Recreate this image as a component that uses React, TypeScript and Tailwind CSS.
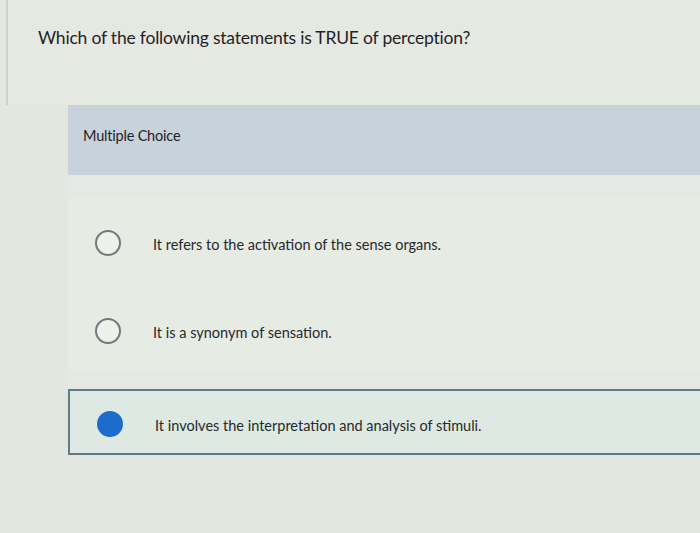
import React from 'react';

const options = [
  { text: 'It refers to the activation of the sense organs.', selected: false },
  { text: 'It is a synonym of sensation.', selected: false },
  { text: 'It involves the interpretation and analysis of stimuli.', selected: true },
];

function Radio({ selected }: { selected: boolean }) {
  if (selected) {
    return <span className="block w-[26px] h-[26px] rounded-full bg-[#1b6ccb]" />;
  }
  return <span className="block w-[26px] h-[26px] rounded-full border-2 border-[#6f7a7f] bg-[#eef1ea]" />;
}

export default function App() {
  return (
    <div
      className="w-[700px] h-[533px] overflow-hidden bg-[#e3e7e0] text-[#1f2326]"
      style={{ fontFamily: 'Lato, "Open Sans", Arial, sans-serif' }}
    >
      {/* question header */}
      <div className="h-[105px] ml-[6px] border-l-2 border-[#cfd3cc] bg-[#e6e9e2] pt-[26px] pl-[30px]">
        <h1 className="text-[17.5px] leading-[24px] tracking-[-0.2px]">
          Which of the following statements is TRUE of perception?
        </h1>
      </div>

      {/* body */}
      <div className="ml-[68px]">
        <div className="h-[70px] bg-[#c8d2dc] pl-[15px] pt-[21px]">
          <p className="text-[14.5px] leading-[20px] tracking-[-0.2px]">Multiple Choice</p>
        </div>

        <div className="pt-[22px] bg-[#e4e9e3]">
          {options.map((o, i) => (
            <div
              key={i}
              className={
                o.selected
                  ? 'flex items-center h-[66px] mt-[16px] border-2 border-r-0 border-[#5f7c86] bg-[#dde9e2]'
                  : 'flex items-center h-[88px] bg-[#e6ebe4]'
              }
            >
              <div className="w-[80px] flex justify-center pt-[3px]">
                <Radio selected={o.selected} />
              </div>
              <span className="ml-[5px] text-[14.5px] leading-[20px] text-[#26292b] mt-[8px]">
                {o.text}
              </span>
            </div>
          ))}
        </div>
      </div>
    </div>
  );
}
